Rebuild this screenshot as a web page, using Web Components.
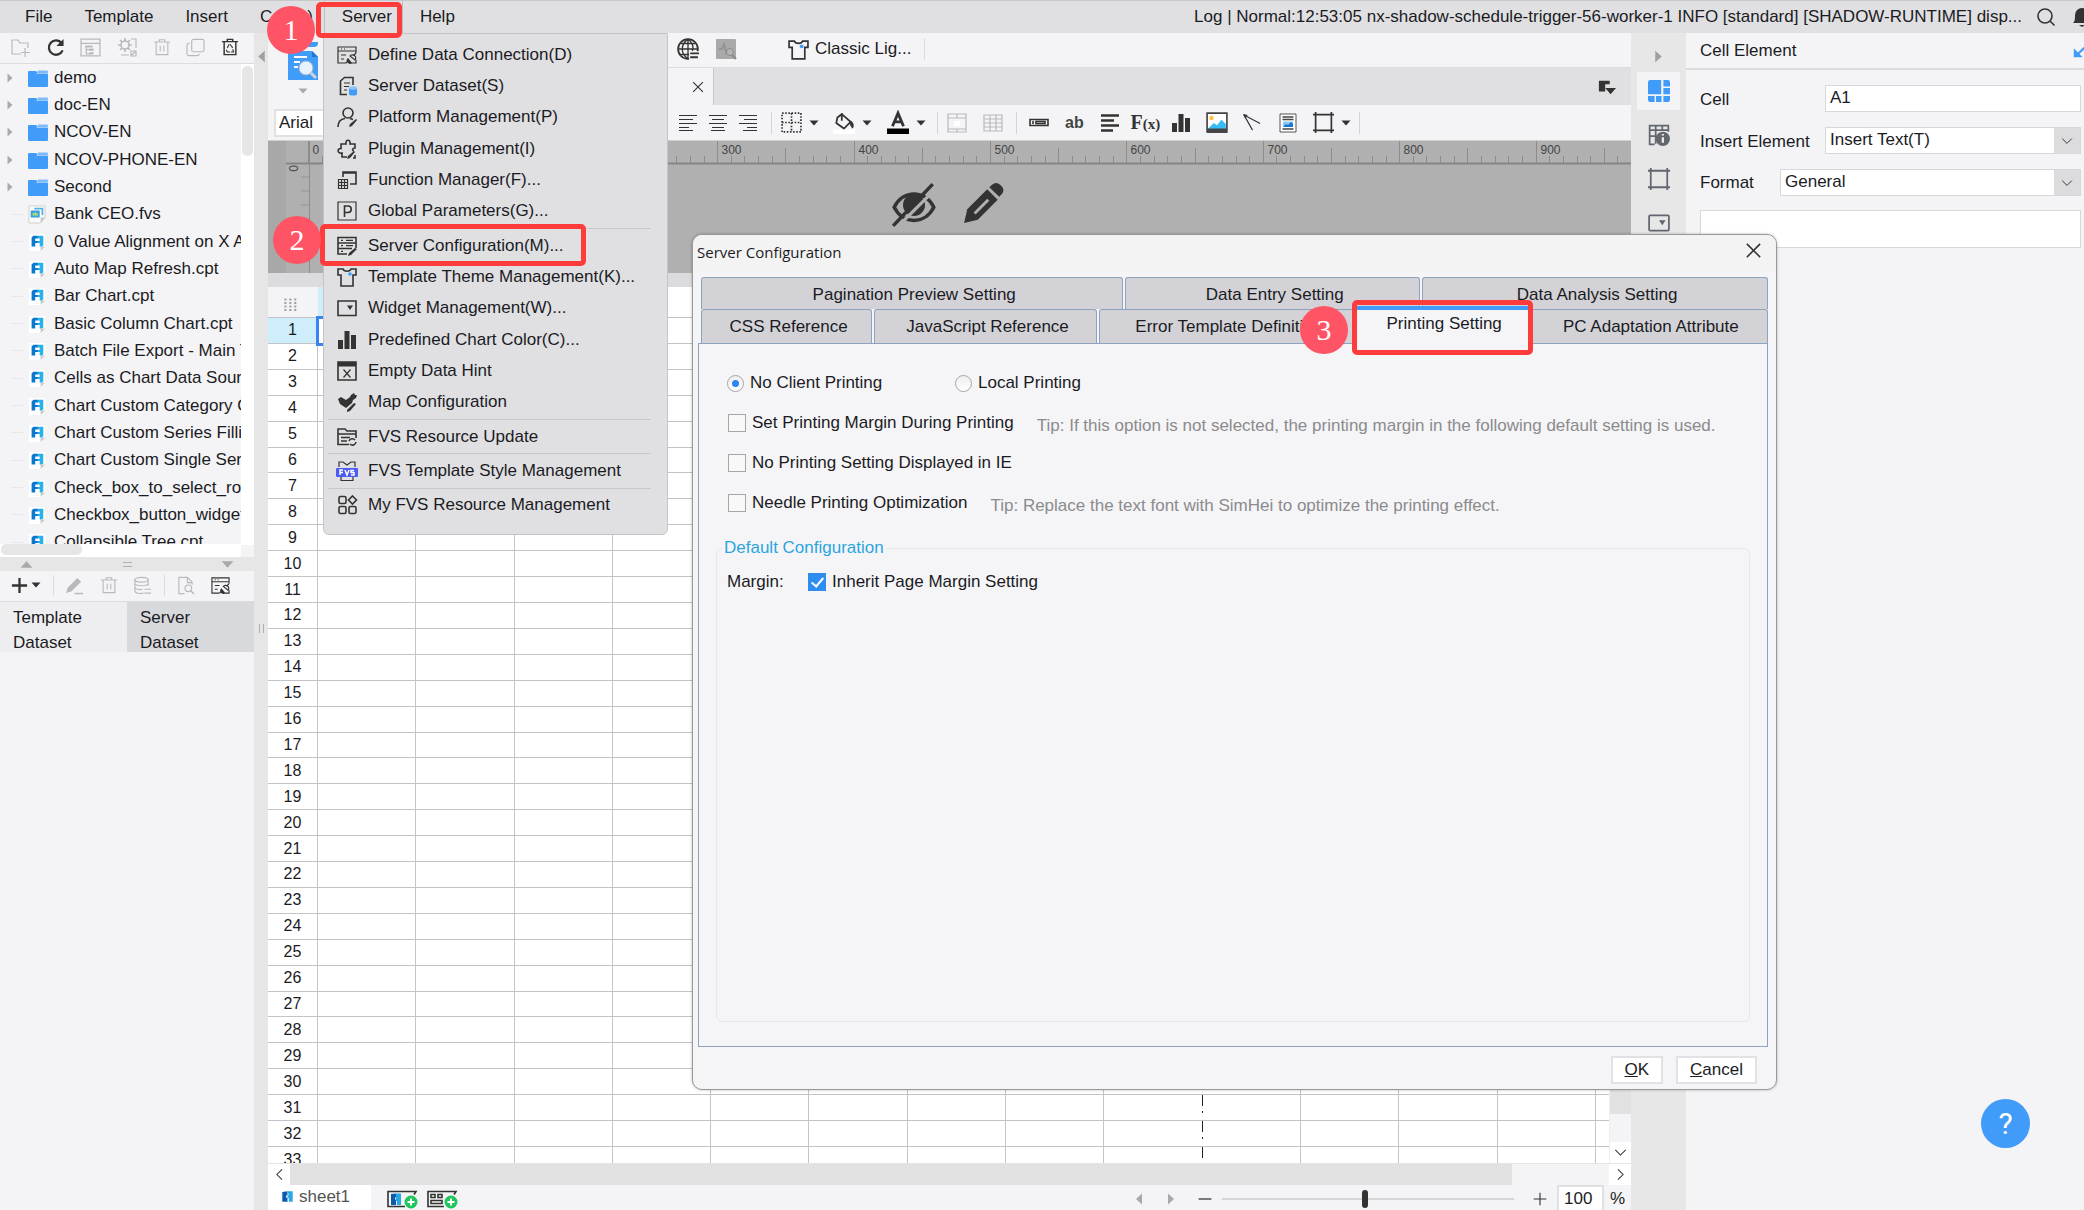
<!DOCTYPE html>
<html lang="en">
<head>
<meta charset="utf-8">
<title>Report Designer</title>
<style>
  html, body { height: 100%; margin: 0; }
  body {
    font-family: "Liberation Sans", Arial, sans-serif;
    font-size: 17px;
    line-height: 20px;
    color: #1b1b1f;
    background: #f4f4f6;
    overflow: hidden;
    --panel: #f4f4f6;
    --bar: #e0e0e2;
    --strip: #e7e7e8;
    --line: #dcdcde;
    --blue: #419bf9;
    --ink: #333;
    --muted: #b9b9bc;
  }
</style>
</head>
<body>
<designer-app></designer-app>
<script>
const plusDot = '<circle cx="24" cy="12" r="6.500" fill="#1fc65c"/><path d="M24 8.500v7M20.500 12h7" stroke="#fff" stroke-width="2"/>';
const ICONS = {
  folderAdd: '<path d="M11 17H2V3h6l2 3h8v5M15 11v9M11 15.500h9" class="s"/>',
  refresh: '<path d="M16.500 5.500A7.500 7.500 0 1 0 17.500 13" class="s w3"/><path d="M18.500 1v7.500h-7.500z" class="f"/>',
  treeBox: '<path d="M1 2h18v16H1zM1 6h18M6 9v7h5M6 12h5" class="s"/><path d="M5 8h7v2H5zM9 11h4v2H9zM9 14.500h4v2H9z" class="f"/>',
  gearBox: '<circle cx="8" cy="8" r="4" class="s w2"/><path d="M8 1v3M8 12v3M1 8h3M12 8h3M3 3l2 2M11 11l2 2M13 3l-2 2M3 13l2-2" class="s w2"/><path d="M14 2h5v9M4 18h8" class="s"/><path d="M14 14h5v5h-5z" class="s"/><path d="M14 19l5-5" class="s"/>',
  trash: '<path d="M1 4.500h18M7 4V2h6v2M3.500 5v13.500h13V5M8 8.500v6.500M12 8.500v6.500" class="s"/>',
  copy: '<rect x="6" y="1.500" width="13" height="13" rx="2" class="s"/><path d="M4 5.500H3a2 2 0 0 0-2 2v9a2 2 0 0 0 2 2h9a2 2 0 0 0 2-2" class="s"/>',
  recycle: '<path d="M1 4h18M7 4V1.500h6V4M3.500 4.500v14h13v-14" class="s w2"/><path d="M10 7l3 4M7 11l2-4M6 13l1 2.500h3M11 15.500h3l-1-3" class="s"/>',
  folder: '<path d="M0 4a1 1 0 0 1 1-1h7l1.500 1.500L8 7H0z" fill="#419bf9"/><path d="M10 2.500h9a1 1 0 0 1 1 1V5H9z" fill="#7dbbfb"/><path d="M0 6.500h8l2-1h9a1 1 0 0 1 1 1V18a1 1 0 0 1-1 1H1a1 1 0 0 1-1-1z" fill="#419bf9"/>',
  report: '<path d="M1 1h18v14l-5 5H1z" fill="#fff"/><path d="M19 15h-5v5z" fill="#c8c8ca"/><path d="M4 5l2-2h5v3H8v3h3v2H8v4H4z" fill="#0b78d0"/><path d="M11 3h6v11l-2 1h-2v-4h-2V9h2V6h-2z" fill="#29b2ea"/>',
  fvs: '<path d="M1 1h18v13l-5 6H1z" fill="#fafafa" stroke="#ccc"/><path d="M19 14h-5v6z" fill="#c8c8ca"/><path d="M7 4h9v7" fill="none" stroke="#58b4e8" stroke-width="2"/><rect x="3" y="6" width="10" height="8" rx="1" fill="#3b9fd8"/><path d="M5 10h6M6 12V9M8 12V8M10 12V9" stroke="#a4e07c" stroke-width="1.500"/>',
  plus: '<path d="M10 2v16M2 10h16" class="s w3"/>',
  minus: '<path d="M2 10h16" class="s w2"/>',
  plusThin: '<path d="M10 1v18M1 10h18" class="s w2"/>',
  pencilLine: '<path d="M1 18l2-6L13 2l4 4L7 16z" class="f"/><path d="M10 18.500h9" class="s w2"/>',
  db: '<ellipse cx="9" cy="4" rx="7" ry="2.500" class="s"/><path d="M2 4v12c0 2 6 3 9 2M16 4v6M2 8c1 3 13 3 14 0M2 12c1 2 5 2.500 8 2M12 14h7M12 18h7" class="s"/>',
  docSearch: '<path d="M9 18.500H3v-17h9l5 5V9M12 2v5h5" class="s"/><circle cx="13" cy="13" r="3.500" class="s"/><path d="M15.500 15.500l3.500 3.500" class="s w2"/>',
  connection: '<path d="M9 18H1V2h18v6M1 6h18M4 4h1M7 4h1M4 10h5M4 14h3" class="s"/><path d="M9 18l2.500-2.500M19 8l-2.500 2.500" class="s"/><path d="M11 13a3 3 0 0 0 4 5z" class="f"/><path d="M13 11a3 3 0 0 1 5 4z" class="s"/><path d="M14 18h5v-3" class="s"/>',
  dataset: '<path d="M10 18.500H3.500V5l4-3.500H16V9" class="s w2"/><path d="M7 7h6M7 10.500h5M7 14h3" class="s"/><path d="M12 12v6c0 2 8 2 8 0v-6z" fill="#419bf9"/><ellipse cx="16" cy="12" rx="4" ry="1.800" fill="#8cc4ff"/>',
  person: '<circle cx="11" cy="6" r="5" class="s w2"/><path d="M1 20c0-5 3-8 7-8.500M13 11.500l3 1" class="s w2"/><path d="M12 20l1-3 6-5 1 1-5 6z" class="f"/>',
  plugin: '<path d="M10 18H5v-4C0 15 0 9 4 9.500V5h5C8 0 14 0 13 5h5v4c-3 0-3 3-1 3M18 16v3h-2" class="s w2"/><path d="M10 20l1-3 6-5 1 1-5 6z" class="f"/>',
  func: '<path d="M6 7V2h13v12h-6M6 3h13" class="s w2"/><path d="M1.500 9.500h9v9h-9zM1.500 12.500h9M1.500 15.500h9M4.500 9.500v9M7.500 9.500v9" class="s"/>',
  param: '<path d="M1 1h18v18H1z" class="s"/><path d="M7.500 16V5H11a3 3 0 0 1 0 6.500H7.500" class="s w2"/>',
  serverCfg: '<path d="M10 18H1V1.500h18V12M1 7h18M1 12.500h14" class="s w2"/><path d="M4 4.300h2M4 9.700h2M4 15.300h2M9 4.300h7M9 9.700h7" class="s"/><path d="M11 20l1-3 6-5 2 1-6 6z" class="f"/>',
  shirt: '<path d="M1 2h5c1 3 7 3 8 0h5v6h-3v11H4V8H1z" class="s w2"/><circle cx="13" cy="7" r="1.800" fill="#419bf9"/>',
  widget: '<path d="M1 3h18v14.500H1z" class="s w2"/><path d="M10 7.500h6L13 12z" class="f"/>',
  bars: '<path d="M1 10h5v9H1zM7.500 1h5v18h-5zM14 5h5v14h-5z" class="f"/>',
  emptyData: '<path d="M1 1h18v18H1z" class="s w2"/><path d="M1 1h18v4.500H1z" class="f"/><path d="M6.500 8.500l7 8M13.500 8.500l-7 8" class="s"/>',
  map: '<path d="M1 7l3-2 5 3 4-3 1-2 3-2 1 2 2 0-1 3-3 2-1 3-6 5-3-2-3-2z" class="f"/><path d="M10 18l7-7 2 1-6 7-3 1z" class="f"/>',
  resUpdate: '<path d="M12 17.500H1V2h7l2 2h9v7M1 7h18M4 10.500h9M4 14h6" class="s w2"/><path d="M12 14a3.500 3.500 0 0 1 6-1M19 15a3.500 3.500 0 0 1-6 2" class="s w2"/>',
  fvsStyle: '<path d="M2 6V1h4l4 3 4-3h4v5M4 16v3.500h12V16" class="s"/><rect x="-1" y="7" width="22" height="9" rx="1" fill="#4a5cf5"/><path d="M3 14V9h3M3 11.500h3M8 9l2 5 2-5M17 9.500h-3v2h3v2.500h-3" fill="none" stroke="#fff" stroke-width="1.500"/>',
  resMgmt: '<rect x="2" y="1.500" width="7" height="7" rx="1.500" class="s w2"/><rect x="2" y="11.500" width="7" height="7" rx="1.500" class="s w2"/><rect x="12" y="11.500" width="7" height="7" rx="1.500" class="s w2"/><path d="M15.500 1l4 4-4 4-4-4z" class="s w2"/>',
  preview: '<path d="M2 0h28v1a4 4 0 0 1-4 4H2z" fill="#419bf9"/><path d="M0 9h24l6 6v23H0z" fill="#419bf9"/><path d="M24 9v6h6z" fill="#1f78d8"/><path d="M6 15h13M6 20h6M6 25h4" stroke="#fff" stroke-width="2"/><circle cx="18" cy="26" r="7" fill="#e6f2ff" stroke="#9cb4cc"/><path d="M23 31l5 5" stroke="#d0d4d8" stroke-width="3"/>',
  globe: '<circle cx="10" cy="10" r="9" class="s w2"/><path d="M10 1v18M1 10h18M3 5h14M3 15h9M10 1c-7 5-7 13 0 18M10 1c5 4 5 8 4 11" class="s"/><path d="M11 12h9v8h-9z" fill="#f4f4f6"/><path d="M12 14h8M12 17.500h7" class="s w2"/>',
  monitor: '<rect width="20" height="20" rx="1" fill="#a9a9a9"/><path d="M3 10h3l2-5 2 9 2-4" fill="none" stroke="#8f8f8f" stroke-width="1.500"/><circle cx="14" cy="13" r="3.500" fill="#b4b4b4" stroke="#8a8a8a"/><path d="M16 16l4 4" stroke="#8a8a8a" stroke-width="2"/>',
  close: '<path d="M3 3l14 14M17 3L3 17" class="s w2"/>',
  tabMenu: '<path d="M1 3h12v4H8v8H1z" class="f"/><path d="M8 11h12l-6 7z" class="f"/>',
  left: '<path d="M1 2.500h18M1 6.500h14M1 10.500h18M1 14.500h10M1 17.500h14" class="s"/>',
  center: '<path d="M1 2.500h18M4 6.500h12M1 10.500h18M4 14.500h12M3 17.500h14" class="s"/>',
  right: '<path d="M1 2.500h18M6 6.500h13M1 10.500h18M9 14.500h10M5 17.500h14" class="s"/>',
  border: '<path d="M1 1h18v18H1zM10 1v18M1 10h18" class="s w2" stroke-dasharray="1.500 1.500"/>',
  bucket: '<path d="M4 5l4-3 8 7-6 6-7-5zM8 1v7" class="s w2"/><path d="M15 8c3 0 5 4 3 7-2-1-3-4-3-7z" class="f"/><path d="M0 16h20v4H0z" fill="#fff"/>',
  fontColor: '<path d="M5 13l5-12 5 12M7 9h6" fill="none" stroke="#333" stroke-width="2.600"/><path d="M0 15h20v5H0z" fill="#000"/>',
  merge: '<path d="M1 1h18v18H1zM1 5h18M1 16h18M10 1v4M10 16v3" class="s"/><path d="M7 8h6v5H7z" fill="#fff"/>',
  table: '<path d="M1 2h18v16H1zM1 6h18M1 10h18M1 14h18M7 2v16M13 2v16" class="s"/>',
  field: '<path d="M1 6.500h18v6H1zM4 8v3M7 8.500h9v2H7z" class="s w2"/>',
  lines: '<path d="M1 2.500h18M1 7.500h13M1 12.500h18M1 17.500h12" class="s w3"/>',
  picture: '<path d="M1 1h18v17H1z" fill="#fff" stroke="#444" stroke-width="1.500"/><circle cx="5" cy="5.500" r="2" fill="#ffc13c"/><path d="M2 15l5-5 3 2 4-5 4 4v5H2z" fill="#37bdf6"/><path d="M1 15h18v4H1z" fill="#444"/>',
  diag: '<path d="M1 2l17 9M1 2l9 16" class="s"/><path d="M0 1l5 1-3 3z" class="f"/>',
  doc: '<path d="M2 1h16v18H2z" fill="#fff" stroke="#555"/><path d="M4.500 4h11M4.500 6.500h11M4.500 16h11" stroke="#444" stroke-width="1.300"/><path d="M5 8.500h10v5.500H5z" fill="#8ac8fa"/><path d="M5 14l3-3 2 1 3-3 2 2v3z" fill="#1478d4"/>',
  frame: '<path d="M2.500 0v20M17.500 0v20M0 2.500h20M0 17.500h20" class="s w2"/>',
  eyeOff: '<path d="M1 11c4-8 14-8 18 0-4 8-14 8-18 0z" class="s w2"/><circle cx="10" cy="10" r="5" class="f"/><path d="M1.500 21L20.500 2" stroke="#b0b0b0" stroke-width="1.500"/><path d="M.5 19.500L18.500.5" class="s w2"/>',
  pencil: '<path d="M1 19l1.500-6.500L12 3l5 5-9.500 9.500z" class="f"/><path d="M6 14.500l6.500-6.500" stroke="#b0b0b0" stroke-width="1.400"/><path d="M13 2l1.500-1.300a2.500 2.500 0 0 1 3.500 0l1 1a2.500 2.500 0 0 1 0 3.500L17.700 6.500z" class="f"/>',
  cellElement: '<path d="M2 0h10v13H0V2a2 2 0 0 1 2-2zM14 0h4a2 2 0 0 1 2 2v4h-6zM14 7.300h6V13h-6zM0 14.500h6V20H2a2 2 0 0 1-2-2zM7.300 14.500h5V20h-5zM14 14.500h6V18a2 2 0 0 1-2 2h-4z" fill="#419bf9"/>',
  cellAttr: '<path d="M6 18.500H1.500V1.500h17V7M1.500 5.500h17M7 2v16M1.500 11H8M13 2v4" class="s w2"/><circle cx="13.500" cy="13.500" r="6.500" class="f"/><path d="M13.500 12v5M13.500 9v1.500" stroke="#eee" stroke-width="2"/>',
  widgetBox: '<rect x="1" y="3" width="18" height="14" rx="1" class="s w2"/><path d="M10 7.500h6L13 12z" class="f"/>',
  search: '<circle cx="9" cy="9" r="7" class="s w2"/><path d="M14 14l4.500 4.500" class="s w2"/>',
  bell: '<path d="M1 16c2-2 2-4 2-8a7 7 0 0 1 14 0c0 4 0 6 2 8zM7 18h6l-3 2z" class="f"/>',
  arrowIn: '<path d="M20 2L6 15" stroke="#419bf9" stroke-width="3"/><path d="M1 7v12h12z" fill="#419bf9"/>',
  chevDown: '<path d="M2 6l8 8 8-8" class="s w2"/>',
  chevLeft: '<path d="M14 2l-8 8 8 8" class="s w2"/>',
  chevRight: '<path d="M6 2l8 8-8 8" class="s w2"/>',
  triDown: '<path d="M1 5h18l-9 10z" class="f"/>',
  triUp: '<path d="M1 15h18L10 5z" class="f"/>',
  triLeft: '<path d="M15 1v18L5 10z" class="f"/>',
  triRight: '<path d="M5 1v18l10-9z" class="f"/>',
  dots: '<path d="M2 2h3v3H2zM9 2h3v3H9zM16 2h3v3h-3zM2 7h3v3H2zM9 7h3v3H9zM16 7h3v3h-3zM2 12h3v3H2zM9 12h3v3H9zM16 12h3v3h-3zM2 17h3v3H2zM9 17h3v3H9zM16 17h3v3h-3z" class="f"/>',
  logo: '<path d="M2 3l8-1v6H8v4h2v6H2z" fill="#0b5cae"/><path d="M10 2h8v16h-6v-6h-2V8h2z" fill="#29a7e4"/>',
  addSheet: '<path d="M18 16.500H1v-15h28l-2 3" class="s w2"/><path d="M4 4l5-.5v4H8v2h1V15H4z" fill="#0b5cae"/><path d="M9 3.500h5V15h-4v-4H9V8z" fill="#29a7e4"/>' + plusDot,
  addForm: '<path d="M17 16.500H1v-15h28l-2 3" class="s w2"/><path d="M4 4.500h4v3H4zM11 4.500h4v3h-4zM4 10.500h11v3H4z" class="s w2"/>' + plusDot
};
class UiIcon extends HTMLElement {
  connectedCallback() {
    const w = this.getAttribute('w') || 20, h = this.getAttribute('h') || w;
    const box = this.getAttribute('box') || '0 0 20 20';
    this.attachShadow({ mode: 'open' }).innerHTML = `<style>
      :host{display:inline-flex;flex:none;color:var(--ink)} svg{display:block;overflow:visible}
      .s{fill:none;stroke:currentColor;stroke-width:1.2}.w2{stroke-width:1.6}.w3{stroke-width:2.4}.f{fill:currentColor}
      </style><svg width="${w}" height="${h}" viewBox="${box}" aria-hidden="true">${ICONS[this.getAttribute('name')]}</svg>`;
  }
}
customElements.define('ui-icon', UiIcon);

const BASE = `*{box-sizing:border-box} button,input,select,textarea{font:inherit;color:inherit;margin:0}
  button{border:0;background:none;padding:0;display:flex;align-items:center;justify-content:center}
  ui-icon.off{color:var(--muted)}`;
const component = (tag, css, html) => customElements.define(tag, class extends HTMLElement {
  constructor() {
    super();
    this.attachShadow({ mode: 'open' }).innerHTML = `<style>${BASE}${css}</style>${typeof html === 'function' ? html() : html}`;
  }
});
const icon = (name, w = 20, cls = '', h = w) => `<ui-icon name="${name}" w="${w}" h="${h}" class="${cls}"></ui-icon>`;
const iconButton = (name, label, w, cls) => `<button type="button" aria-label="${label}">${icon(name, w, cls)}</button>`;

component('menu-bar', `
  :host{display:flex;flex:none;height:33px;background:var(--bar);border-top:1px solid #c8c8ca;padding:0 0 0 15px;overflow:hidden}
  nav{display:flex} nav button{padding:0 10px;margin-right:12px;height:32px}
  nav .open{border:solid #bdbdc0;border-width:0 1px;padding:0 10px 0 17px;margin-right:7px}
  nav .pre{margin-right:1px}
  .log{margin-left:auto;display:flex;align-items:center;white-space:nowrap}
  .log button{margin-left:14px}
  .log .bell{margin-right:-8px;margin-left:16px}`, `
  <nav><button>File</button><button>Template</button><button>Insert</button><button class="pre">Cell(C)</button>
  <button class="open" aria-expanded="true">Server</button><button>Help</button></nav>
  <div class="log"><span>Log | Normal:12:53:05 nx-shadow-schedule-trigger-56-worker-1 INFO [standard] [SHADOW-RUNTIME] disp...</span>
  <button aria-label="Search">${icon('search', 20)}</button><button class="bell" aria-label="Notifications">${icon('bell', 20)}</button></div>`);

const TREE = [['demo'], ['doc-EN'], ['NCOV-EN'], ['NCOV-PHONE-EN'], ['Second'], ['Bank CEO.fvs', 'fvs'],
  ...['0 Value Alignment on X Axis.cpt', 'Auto Map Refresh.cpt', 'Bar Chart.cpt', 'Basic Column Chart.cpt', 'Batch File Export - Main Template.cpt',
  'Cells as Chart Data Source.cpt', 'Chart Custom Category Order.cpt', 'Chart Custom Series Filling.cpt', 'Chart Custom Single Series.cpt',
  'Check_box_to_select_rows.cpt', 'Checkbox_button_widget.cpt', 'Collapsible Tree.cpt'].map(n => [n, 'report'])];

component('template-tree', `
  :host{display:flex;flex:none;height:494px;border-top:1px solid var(--line)}
  .main{flex:1;min-width:0;display:flex;flex-direction:column}
  .clip{height:481px;overflow:hidden}
  ul{margin:0;padding:0;list-style:none;display:grid;grid-auto-rows:1fr;height:492px}
  li{display:grid;grid-template-columns:26px 26px auto;align-items:center;padding-left:2px;white-space:nowrap}
  li ui-icon.arrow{color:#a9a9ab;margin-left:3px}
  li i{width:12px;height:1px;background:#e7e7ea;margin-left:9px}
  .h{height:13px;background:#fff}.h div{width:81px;height:11px;margin-left:1px;border-radius:5px;background:#e6e6e7}
  .v{width:13px;background:#fff;height:481px;padding-top:2px}.v div{height:90px;width:11px;margin-left:1px;border-radius:5px;background:#e6e6e7}`,
  () => `<div class="main"><div class="clip"><ul>${TREE.map(([n, k]) =>
    `<li>${k ? '<i></i>' : icon('triRight', 10, 'arrow')}${k ? icon(k, 18) : icon('folder', 20)}<span>${n}</span></li>`).join('')}</ul></div>
    <div class="h"><div></div></div></div><div class="v"><div></div></div>`);

component('side-panel', `
  :host{display:flex;flex-direction:column;flex:none;width:254px;background:var(--panel);white-space:nowrap}
  .tools{height:30px;display:flex;align-items:center;justify-content:space-between;padding:0 15px 2px 10px}
  .split{height:14px;background:#e6e6e6;display:flex;align-items:center;justify-content:space-between;padding:0 20px}
  .split ui-icon{color:#a9a9ab}.split b{width:9px;height:5px;border:solid #b0b0b2;border-width:1px 0}
  .ds{height:30px;display:flex;align-items:center;padding:0 24px 2px 10px;justify-content:space-between}
  .ds i{width:1px;height:21px;background:var(--line);margin:0 -4px}
  .ds .add{gap:2px}
  .tabs{display:flex;height:51px;border-top:1px solid var(--line)}
  .tabs button{flex:1;text-align:left;justify-content:flex-start;padding:5px 13px 0;line-height:25px;background:#eeeef0;white-space:normal}
  .tabs .on{background:#d8d9dd}`, `
  <div class="tools">${iconButton('folderAdd','New folder',20,'off')}${iconButton('refresh','Refresh',19)}${iconButton('treeBox','Locate',21,'off')}
  ${iconButton('gearBox','Settings',20,'off')}${iconButton('trash','Delete',18,'off')}${iconButton('copy','Copy',19,'off')}${iconButton('recycle','Recycle bin',18)}</div>
  <template-tree></template-tree>
  <div class="split">${icon('triUp',13)}<b></b>${icon('triDown',13)}</div>
  <div class="ds"><button class="add" aria-label="Add dataset">${icon('plus',19)}${icon('triDown',10)}</button><i></i>
  ${iconButton('pencilLine','Edit',19,'off')}${iconButton('trash','Delete',18,'off')}${iconButton('db','Database',19,'off')}<i></i>
  ${iconButton('docSearch','Preview',19,'off')}${iconButton('connection','Connection',19)}</div>
  <div class="tabs"><button>Template<br>Dataset</button><button class="on">Server<br>Dataset</button></div>`);

component('split-bar', `
  :host{display:flex;flex-direction:column;align-items:center;flex:none;width:14px;background:#e6e6e6;padding-top:17px}
  ui-icon{color:#a0a0a2} b{width:5px;height:9px;border:solid #b0b0b2;border-width:0 1px;margin-top:561px}`,
  `${icon('triLeft',13)}<b></b>`);

component('designer-head', `
  :host{display:block;flex:none;background:var(--panel)}
  .top{display:flex;height:72px}
  .pv{width:60px;flex:none;display:flex;flex-direction:column;align-items:center;gap:6px;padding:9px 0 0 10px}
  .pv ui-icon:last-child{color:#a9a9ab}
  .cols{flex:1;display:flex;flex-direction:column}
  .r1{height:35px;display:flex;align-items:center;padding:0 0 2px 349px;border-bottom:1px solid var(--line)}
  .r1 .t{margin-left:52px;gap:6px;padding-right:13px;border-right:1px solid var(--line);height:22px}
  .r1 .m{margin-left:17px}
  .tabs{height:37px;display:flex;background:var(--bar);justify-content:space-between}
  .tab{width:386px;background:var(--panel);border-right:1px solid #c8c8ca;display:flex;align-items:center;justify-content:flex-end;padding-right:8px}
  .tabs>button{margin-right:15px}
  .bar{height:36px;display:flex;align-items:center;padding-left:6px;border-bottom:1px solid #d0d0d2}
  .font{flex:0 0 399px;display:flex}
  select{appearance:none;width:140px;height:28px;border:2px solid #e2e2e4;background:#fff;padding:0 3px}
  .g{display:flex}.g button{width:30px;height:26px}.g .c{width:16px}
  .fill{margin-left:7px}.color{margin-left:8px}.cells{gap:6px}
  .sep{width:1px;height:22px;background:#d4d4d6;margin:0 8px}.sep.s{margin-right:4px}
  .ins{display:flex;width:320px}.ins button{flex:1;height:26px}
  b{font-size:16px;color:#444}.fx{font-family:"Liberation Serif",serif;font-size:20px;color:#333}.fx small{font-size:15px}`, `
  <div class="top"><div class="pv"><ui-icon name="preview" w="30" h="38" box="0 0 30 38"></ui-icon>${icon('triDown',10)}</div>
  <div class="cols"><div class="r1">${iconButton('globe','Remote design',22)}<button class="m" aria-label="Monitor">${icon('monitor',20)}</button>
  <button class="t">${icon('shirt',21)}Classic Lig...</button></div>
  <div class="tabs"><div class="tab">${iconButton('close','Close tab',14)}</div>${iconButton('tabMenu','Tab list',18)}</div></div></div>
  <div class="bar"><div class="font"><select aria-label="Font"><option>Arial</option></select></div>
  <div class="g">${iconButton('left','Align left',20)}${iconButton('center','Align center',20)}${iconButton('right','Align right',20)}</div><div class="sep s"></div>
  <div class="g">${iconButton('border','Border',21)}<button class="c" aria-label="Border menu">${icon('triDown',10)}</button></div>
  <div class="g fill"><button aria-label="Fill">${icon('bucket',22)}</button><button class="c" aria-label="Fill menu">${icon('triDown',10)}</button></div>
  <div class="g color"><button aria-label="Text color">${icon('fontColor',22)}</button><button class="c" aria-label="Color menu">${icon('triDown',10)}</button></div>
  <div class="sep s"></div><div class="g cells">${iconButton('merge','Merge cells',20,'off')}${iconButton('table','Unmerge cells',20,'off')}</div><div class="sep s"></div>
  <div class="ins">${iconButton('field','Widget',20)}<button><b>ab</b></button>${iconButton('lines','Rich text',20)}<button><b class="fx">F<small>(x)</small></b></button>
  ${iconButton('bars','Chart',20)}${iconButton('picture','Image',22)}${iconButton('diag','Bias',19)}${iconButton('doc','Sub-report',20)}${iconButton('frame','Float element',21)}</div>
  <button aria-label="Float menu">${icon('triDown',10)}</button><div class="sep"></div></div>`);

component('canvas-ruler', `
  :host{display:block;flex:none;height:146px;background:#b0b0b0;position:relative;border-bottom:14px solid #dcdcde;box-sizing:border-box}
  svg{display:block;width:100%;height:132px} text{font-size:12px;fill:#444}
  .ic{position:absolute;left:624px;top:42px;display:flex;gap:26px}`, () => {
    let s = '<rect width="18" height="132" fill="#a8a8a8"/><path d="M18 22.500H10000" stroke="#858585" stroke-width="2"/><path d="M41.500 0V132" stroke="#8c8c8c"/>';
    for (let i = 0; i < 97; i++) {
      const x = Math.round(40 + i * 13.64) + .5, y = i % 10 === 0 ? 0 : i % 5 === 0 ? 7 : 15;
      s += `<path d="M${x} ${y}V22" stroke="#8c8c8c"/>`;
      if (i % 10 === 0 && (i === 0 || i > 20)) s += `<text x="${x + 4}" y="13">${i * 10}</text>`;
      if (i && i < 8) s += `<path d="M${i === 5 ? 27 : 33} ${22 + i * 14}H41" stroke="#959595"/>`;
    }
    return `<svg>${s}<text transform="translate(21 24) rotate(90)">0</text></svg>
    <div class="ic">${icon('eyeOff', 44)}${icon('pencil', 42)}</div>`;
  });

component('sheet-grid', `
  :host{display:flex;flex:1;min-height:0;background:#fff;overflow:hidden}
  .clip{flex:1;min-width:0;overflow:hidden}
  table{width:100%;height:886px;border-collapse:separate;border-spacing:0;table-layout:fixed;line-height:16px}
  th,td{padding:0;border:solid #c4c4c6;border-width:0 1px 1px 0;font-weight:400}
  thead th{height:31px}
  th:first-child{width:50px;font-size:16px}tr>:last-child{width:13px;border-right:0}
  thead th:first-child{background:var(--panel);padding:3px 6px 0 0}thead ui-icon{color:#a0a0a2;vertical-align:middle}
  thead th{border-right:0}
  .sel{background:#cdeefa}.cur{outline:3px solid #3c82f0;outline-offset:-1px}
  td.pg{border-right:0;background:repeating-linear-gradient(#222 0 11px,#fff 11px 16px,#222 16px 18px,#fff 18px 26px) right/1px 100% no-repeat}
  .v{width:22px;display:flex;flex-direction:column;background:var(--panel);border-left:1px solid #eee}
  .v div{height:827px;background:#e1e1e1}.v span{flex:1}.v button{height:21px;background:#fff}`,
  () => `<div class="clip"><table><thead><tr><th>${icon('dots',14)}</th><th class="sel"></th>${'<th></th>'.repeat(13)}</tr></thead><tbody>${
    Array.from({ length: 33 }, (_, r) => `<tr><th class="${r ? '' : 'sel'}">${r + 1}</th>${
      Array.from({ length: 14 }, (_, c) => `<td class="${c === 8 ? 'pg' : ''}${!r && !c ? 'cur' : ''}"></td>`).join('')}</tr>`).join('')}</tbody></table></div>
  <div class="v"><div></div><span></span><button aria-label="Scroll down">${icon('chevDown',13)}</button></div>`);

component('sheet-footer', `
  :host{display:block;flex:none;background:var(--panel)}
  .h{height:22px;display:flex;border-top:1px solid #e4e4e6}.h button{width:22px;background:#fff}
  .h div{flex:1;padding-right:97px}.h div i{display:block;height:100%;background:#e1e1e1}
  .b{height:25px;display:flex;align-items:center}
  .s{width:103px;height:25px;background:#fff;gap:5px;color:#555;justify-content:flex-start;padding:0 0 2px 13px}
  .a{margin-left:16px;margin-right:-6px;padding-top:2px}
  .z{margin-left:auto;display:flex;align-items:center;color:#222;padding-top:3px}
  .z .off{color:#a9a9ab}.next{margin:0 20px}
  input[type=range]{appearance:none;width:292px;height:20px;background:linear-gradient(#d6d6d8,#d6d6d8) center/100% 2px no-repeat;margin:0 19px 0 9px}
  input[type=range]::-webkit-slider-thumb{appearance:none;width:6px;height:18px;border-radius:3px;background:#333}
  .n{width:47px;height:28px;border:2px solid #e0e0e2;background:#fff;padding:0 5px;margin:0 6px 0 10px}
  .z span{width:21px}`, `
  <div class="h"><button aria-label="Scroll left">${icon('chevLeft',13)}</button><div><i></i></div><button aria-label="Scroll right">${icon('chevRight',13)}</button></div>
  <div class="b"><button class="s">${icon('logo',13)}sheet1</button>
  <button class="a" aria-label="Add sheet"><ui-icon name="addSheet" w="30" h="18" box="0 0 30 18"></ui-icon></button>
  <button class="a" aria-label="Add form"><ui-icon name="addForm" w="30" h="18" box="0 0 30 18"></ui-icon></button>
  <div class="z"><button aria-label="Previous">${icon('triLeft',12,'off')}</button><button aria-label="Next" class="next">${icon('triRight',12,'off')}</button>
  <button aria-label="Zoom out">${icon('minus',16)}</button><input type="range" aria-label="Zoom" min="0" max="100" value="49">
  <button aria-label="Zoom in">${icon('plusThin',14)}</button><input class="n" aria-label="Zoom percent" value="100"><span>%</span></div></div>`);

component('attr-strip', `
  :host{display:flex;flex-direction:column;align-items:center;flex:none;width:55px;background:var(--strip);padding-top:17px;box-sizing:border-box}
  .g{color:#a0a0a2;margin-bottom:9px} button{width:43px;height:38px;margin-bottom:6px}.on{background:var(--panel)}
  button ui-icon{color:#62666f}`, `
  ${icon('triRight',13,'g')}<button class="on" aria-label="Cell element">${icon('cellElement',22)}</button><button aria-label="Cell attribute">${icon('cellAttr',22)}</button>
  <button aria-label="Float element">${icon('frame',22)}</button><button aria-label="Widget settings">${icon('widgetBox',22)}</button>`);

component('attr-panel', `
  :host{display:block;flex:0 0 398px;min-width:0;background:var(--panel)}
  header{height:37px;display:flex;justify-content:space-between;align-items:center;padding:0 0 0 14px;border-bottom:2px solid var(--line);overflow:hidden}
  header ui-icon{margin-right:-4px}
  .r{display:flex;align-items:center;height:27px;margin:15px 3px 0 14px}
  label{width:125px;padding-top:3px}.f label{width:80px;padding:0}
  input,.w{flex:1;min-width:0;height:27px;border:1px solid #d8d8da;background:#fff;padding:0 4px 2px}
  .w{padding:0;display:flex}select{appearance:none;border:0;background:transparent;flex:1;padding:0 4px 1px}
  .w span{width:26px;background:var(--line);display:flex;align-items:center;justify-content:center}
  textarea{display:block;margin:14px 3px 0 14px;width:calc(100% - 17px);height:38px;resize:none;border:1px solid #d8d8da;background:#fff}`, `
  <header>Cell Element ${icon('arrowIn',15)}</header>
  <div class="r"><label for="c">Cell</label><input id="c" value="A1"></div>
  <div class="r"><label for="i">Insert Element</label><div class="w"><select id="i"><option>Insert Text(T)</option></select><span>${icon('chevDown',12)}</span></div></div>
  <div class="r f"><label for="f">Format</label><div class="w"><select id="f"><option>General</option></select><span>${icon('chevDown',12)}</span></div></div>
  <textarea aria-label="Format preview"></textarea>`);

component('server-menu', `
  :host{display:flex;flex-direction:column;position:absolute;left:323px;top:33px;width:345px;height:502px;background:var(--bar);box-sizing:border-box;
    border:1px solid #c4c4c6;border-radius:0 0 6px 6px;padding:5px 0 13px;z-index:2;white-space:nowrap}
  button{flex:1;justify-content:flex-start;gap:11px;padding-left:13px}
  hr{border:0;border-top:1px solid #c8c8ca;margin:1px 16px 1px 4px}`,
  () => [['connection','Define Data Connection(D)'],['dataset','Server Dataset(S)'],['person','Platform Management(P)'],['plugin','Plugin Management(I)'],
    ['func','Function Manager(F)...'],['param','Global Parameters(G)...'],0,['serverCfg','Server Configuration(M)...'],['shirt','Template Theme Management(K)...'],
    ['widget','Widget Management(W)...'],['bars','Predefined Chart Color(C)...'],['emptyData','Empty Data Hint'],['map','Map Configuration'],0,
    ['resUpdate','FVS Resource Update'],0,['fvsStyle','FVS Template Style Management'],0,['resMgmt','My FVS Resource Management']]
    .map(x => x ? `<button type="button" role="menuitem">${icon(x[0], 20)}${x[1]}</button>` : '<hr>').join(''));

component('config-dialog', `
  :host{display:flex;flex-direction:column;position:absolute;left:692px;top:234px;width:1085px;height:856px;background:#f5f5f7;box-sizing:border-box;
    border:1px solid #999;border-radius:10px;z-index:3;overflow:hidden;white-space:nowrap;box-shadow:0 0 3px #0004}
  header{height:36px;background:#f3f3f3;display:flex;align-items:center;justify-content:space-between;padding:0 13px 2px 4px;font:15px/20px "Open Sans",sans-serif}
  header button{margin-bottom:3px}
  .tabs{padding:6px 8px 0}.row{display:flex;gap:2px}
  .row button{height:34px;background:#d3d3d7;border:1px solid #8da3bf;border-bottom:0;border-radius:3px 3px 0 0;min-width:0;padding-left:4px}
  .row:first-child button{height:32px;padding-top:2px}
  .row .on{position:relative;background:#f5f5f7;height:38px;margin:-3px 0 -1px;border:0;border-top:4px solid var(--blue);border-radius:0;padding-bottom:7px}
  .row:last-child{align-items:flex-start;height:34px}
  .panel{flex:1;margin:0 8px 0 5px;border:1px solid #8da3bf;padding:19px 17px 24px;display:flex;flex-direction:column}
  .o{height:40px;display:flex;align-items:center;padding-left:12px}
  .o.rd{padding-left:11px}
  input{appearance:none;width:18px;height:18px;border:1px solid #a6a6a8;background:#f8f8f8;flex:none;margin-right:6px;display:grid;place-content:center}
  input[type=radio]{border-radius:50%;width:17px;height:17px;background:linear-gradient(#eee,#fff)}
  input[type=radio]:checked::before{content:"";width:7px;height:7px;border-radius:50%;background:#2f86ee}
  input[type=checkbox]:checked{background:#2f8df0;border-color:#2f8df0}
  input[type=checkbox]:checked::before{content:"";width:5px;height:10px;border:solid #fff;border-width:0 2px 2px 0;transform:rotate(40deg);margin-bottom:3px}
  .tip{color:#8b8b8d;margin-left:23px;padding-top:5px}
  .rd label{width:205px}
  fieldset{flex:1;margin:15px 0 0;border:1px solid #e8e8ea;border-radius:6px;padding:4px 10px}
  legend{color:#2ba5e0;margin-left:-5px;padding:0 2px}
  fieldset .o{padding:0}fieldset span{width:81px}
  footer{height:42px;display:flex;justify-content:flex-end;align-items:center;gap:13px;padding:3px 19px 0 0}
  footer button{height:28px;background:#fff;border:2px solid #e2e2e4;padding:0 12px;min-width:50px;display:block}
  .t424{flex:424 1 0}.t294{flex:294 1 0}.t346{flex:346 1 0}.t170{flex:170 1 0}.t223{flex:223 1 0}.t257{flex:257 1 0}.t172{flex:172 1 0}.t239{flex:239 1 0}`, `
  <header><span>Server Configuration</span><button aria-label="Close">${icon('close',19)}</button></header>
  <div class="tabs" role="tablist"><div class="row"><button class="t424">Pagination Preview Setting</button><button class="t294">Data Entry Setting</button><button class="t346">Data Analysis Setting</button></div>
  <div class="row"><button class="t170">CSS Reference</button><button class="t223">JavaScript Reference</button><button class="t257">Error Template Definition</button><button class="on t172">Printing Setting</button><button class="t239">PC Adaptation Attribute</button></div></div>
  <div class="panel">
    <div class="o rd"><input type="radio" name="p" id="r1" checked><label for="r1">No Client Printing</label><input type="radio" name="p" id="r2"><label for="r2">Local Printing</label></div>
    <div class="o"><input type="checkbox" id="k1"><label for="k1">Set Printing Margin During Printing</label><span class="tip">Tip: If this option is not selected, the printing margin in the following default setting is used.</span></div>
    <div class="o"><input type="checkbox" id="k2"><label for="k2">No Printing Setting Displayed in IE</label></div>
    <div class="o"><input type="checkbox" id="k3"><label for="k3">Needle Printing Optimization</label><span class="tip">Tip: Replace the text font with SimHei to optimize the printing effect.</span></div>
    <fieldset><legend>Default Configuration</legend><div class="o"><span>Margin:</span><input type="checkbox" id="k4" checked><label for="k4">Inherit Page Margin Setting</label></div></fieldset>
  </div>
  <footer><button><u>O</u>K</button><button><u>C</u>ancel</button></footer>`);

component('step-badge', `
  :host{position:absolute;z-index:5;width:48px;height:48px;border-radius:50%;background:#ff5466;color:#fff;display:flex;align-items:center;justify-content:center;
    font:30px/48px "Liberation Serif",serif}`, '<slot></slot>');
component('focus-box', `:host{position:absolute;z-index:4;box-sizing:border-box;border:5px solid #ff3c3c;border-radius:5px}`, '');

component('designer-app', `
  :host{display:flex;flex-direction:column;height:100vh;position:relative}
  .body{flex:1;display:flex;min-height:0}
  main{flex:1;min-width:0;display:flex;flex-direction:column}
  .help{position:absolute;right:54px;bottom:62px;width:49px;height:49px;border-radius:50%;background:var(--blue);color:#fff;font:30px/49px Roboto,sans-serif}`, `
  <menu-bar></menu-bar>
  <div class="body"><side-panel></side-panel><split-bar></split-bar>
  <main><designer-head></designer-head><canvas-ruler></canvas-ruler><sheet-grid></sheet-grid><sheet-footer></sheet-footer></main>
  <attr-strip></attr-strip><attr-panel></attr-panel></div>
  <server-menu role="menu"></server-menu><config-dialog role="dialog"></config-dialog>
  <focus-box style="left:316px;top:2px;width:86px;height:36px"></focus-box>
  <focus-box style="left:320px;top:224px;width:266px;height:42px"></focus-box>
  <focus-box style="left:1352px;top:300px;width:181px;height:55px"></focus-box>
  <step-badge style="left:267px;top:6px">1</step-badge><step-badge style="left:273px;top:216px">2</step-badge><step-badge style="left:1300px;top:306px">3</step-badge>
  <button class="help" aria-label="Help">?</button>`);
</script>
</body>
</html>
